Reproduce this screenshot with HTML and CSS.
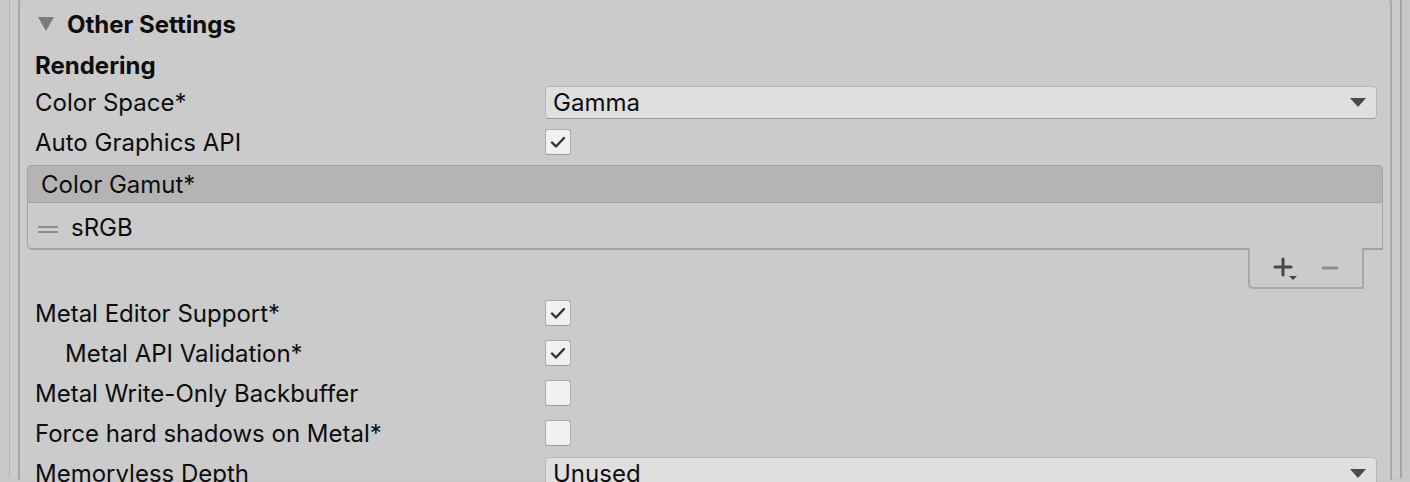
FILE: index.html
```html
<!DOCTYPE html>
<html lang="en">
<head>
  <meta charset="UTF-8">
  <title>Player Settings - Other Settings</title>
  <link rel="stylesheet" href="styles.css">
</head>
<body>
  <div class="shell">
    <div class="panel">
      <div class="foldout">
        <span class="fold-arrow"></span>
        <span class="fold-title">Other Settings</span>
      </div>

      <div class="heading">Rendering</div>

      <div class="row">
        <div class="label">Color Space*</div>
        <div class="value">
          <div class="dropdown"><span>Gamma</span><span class="caret"></span></div>
        </div>
      </div>

      <div class="row">
        <div class="label">Auto Graphics API</div>
        <div class="value">
          <span class="toggle checked">
            <svg width="26" height="26" viewBox="0 0 26 26"><path d="M7 13.5 L11 17.5 L19 9" fill="none" stroke="#333" stroke-width="2.4" stroke-linecap="round" stroke-linejoin="round"/></svg>
          </span>
        </div>
      </div>

      <div class="list">
        <div class="list-header">Color Gamut*</div>
        <div class="list-item">
          <span class="handle"></span>
          <span>sRGB</span>
        </div>
        <div class="list-footer">
          <span class="btn-add">
            <svg width="30" height="26" viewBox="0 0 30 26"><path d="M11 4 V20 M3 12 H19" stroke="#474747" stroke-width="3" stroke-linecap="round"/><path d="M17 21 H25 L21 25 Z" fill="#474747"/></svg>
          </span>
          <span class="btn-remove">
            <svg width="20" height="26" viewBox="0 0 20 26"><path d="M3 13 H17" stroke="#8e8e8e" stroke-width="3" stroke-linecap="round"/></svg>
          </span>
        </div>
      </div>

      <div class="row">
        <div class="label">Metal Editor Support*</div>
        <div class="value">
          <span class="toggle checked">
            <svg width="26" height="26" viewBox="0 0 26 26"><path d="M7 13.5 L11 17.5 L19 9" fill="none" stroke="#333" stroke-width="2.4" stroke-linecap="round" stroke-linejoin="round"/></svg>
          </span>
        </div>
      </div>

      <div class="row">
        <div class="label indent">Metal API Validation*</div>
        <div class="value">
          <span class="toggle checked">
            <svg width="26" height="26" viewBox="0 0 26 26"><path d="M7 13.5 L11 17.5 L19 9" fill="none" stroke="#333" stroke-width="2.4" stroke-linecap="round" stroke-linejoin="round"/></svg>
          </span>
        </div>
      </div>

      <div class="row">
        <div class="label">Metal Write-Only Backbuffer</div>
        <div class="value"><span class="toggle"></span></div>
      </div>

      <div class="row">
        <div class="label">Force hard shadows on Metal*</div>
        <div class="value"><span class="toggle"></span></div>
      </div>

      <div class="row">
        <div class="label">Memoryless Depth</div>
        <div class="value">
          <div class="dropdown"><span>Unused</span><span class="caret"></span></div>
        </div>
      </div>
    </div>
  </div>
</body>
</html>
```

FILE: styles.css
```css
html, body {
  margin: 0;
  height: 100%;
  overflow: hidden;
}
body {
  background-color: #c8c8c8;
  font-family: Inter, "Noto Sans", sans-serif;
  font-size: 24px;
  color: #0d0d0d;
}
.shell {
  margin: 0 8px 0 9px;
  padding: 0 8px;
  height: 100%;
  border-left: 1px solid #b2b2b2;
  border-right: 2px solid #a6a6a6;
  background-color: #cbcbcb;
}
.panel {
  margin-top: -4px;
  padding: 0 7px;
  height: 100%;
  border: 2px solid #a8a8a8;
  border-bottom: none;
  border-radius: 7px 7px 0 0;
  background-color: #cbcbcb;
}
.foldout {
  height: 50px;
  display: flex;
  align-items: center;
  padding-left: 11px;
}
.fold-arrow {
  width: 0;
  height: 0;
  border-left: 8px solid transparent;
  border-right: 8px solid transparent;
  border-top: 14px solid #7b7b7b;
  margin-right: 13px;
  margin-top: 1px;
}
.fold-title {
  font-weight: 700;
  padding-top: 2px;
}
.heading {
  height: 34px;
  display: flex;
  align-items: center;
  padding-left: 8px;
  font-weight: 700;
}
.row {
  height: 40px;
  display: flex;
  align-items: center;
  padding: 0 6px 0 8px;
}
.label {
  width: 510px;
  flex: none;
}
.label.indent {
  padding-left: 30px;
  box-sizing: border-box;
}
.value {
  flex: 1;
  display: flex;
  align-items: center;
}
.dropdown {
  flex: 1;
  height: 31px;
  display: flex;
  align-items: center;
  justify-content: space-between;
  padding: 0 10px 0 7px;
  background-color: #dfdfdf;
  border: 1px solid #b6b6b6;
  border-bottom-color: #9a9a9a;
  border-radius: 4px;
}
.caret {
  width: 0;
  height: 0;
  border-left: 8px solid transparent;
  border-right: 8px solid transparent;
  border-top: 9px solid #4b4b45;
}
.toggle {
  width: 24px;
  height: 24px;
  display: block;
  background-color: #f0f0f0;
  border: 1px solid #acacac;
  border-bottom-color: #9c9c9c;
  border-radius: 3px;
  position: relative;
}
.toggle svg {
  position: absolute;
  left: -1px;
  top: -1px;
}
.list {
  margin-top: 3px;
  margin-bottom: 4px;
}
.list-header {
  height: 36px;
  display: flex;
  align-items: center;
  padding-left: 13px;
  background-color: #b4b4b4;
  border: 1px solid #a2a2a2;
  border-radius: 4px 4px 0 0;
}
.list-item {
  height: 47px;
  display: flex;
  align-items: center;
  padding: 4px 0 0 10px;
  box-sizing: border-box;
  border: 1px solid #a2a2a2;
  border-top: none;
  border-bottom-width: 2px;
  border-radius: 0 0 0 5px;
}
.handle {
  width: 20px;
  height: 3px;
  border-top: 2px solid #8c8c8c;
  border-bottom: 2px solid #8c8c8c;
  margin-right: 13px;
  margin-top: 3px;
}
.list-footer {
  width: 112px;
  height: 39px;
  margin: -2px 19px 0 auto;
  display: flex;
  align-items: center;
  justify-content: center;
  gap: 18px;
  background-color: #cbcbcb;
  border: 2px solid #a8a8a8;
  border-top: none;
  border-radius: 0 0 0 5px;
  position: relative;
}
.btn-add, .btn-remove {
  display: flex;
}
```
